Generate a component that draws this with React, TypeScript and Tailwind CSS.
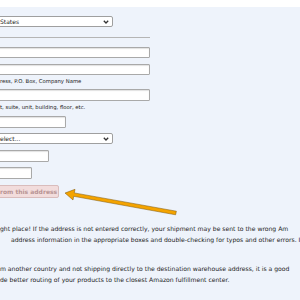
import React from "react";

function Field({ w, mt, h = "h-[11px]" }: { w: string; mt: string; h?: string }) {
  return (
    <div
      className={`${w} ${mt} ${h} -ml-[4px] bg-white border border-[#a9a9a9] rounded-[1px] shadow-[inset_0_1px_1px_rgba(0,0,0,0.12)]`}
    />
  );
}

function Select({ w, mt, label }: { w: string; mt: string; label: string }) {
  return (
    <div
      className={`${w} ${mt} h-[11px] -ml-[4px] bg-white border border-[#9f9f9f] rounded-[2px] flex items-center justify-between pl-[3px] pr-[3px]`}
    >
      <span className="text-[6px] leading-none text-[#222]">{label}</span>
      <svg width="6" height="4" viewBox="0 0 6 4">
        <path d="M0.8 0.8 L3 3 L5.2 0.8" fill="none" stroke="#333" strokeWidth="1.3" />
      </svg>
    </div>
  );
}

export default function App() {
  return (
    <div className="relative w-[300px] h-[300px] overflow-hidden bg-[#eef3fb] font-['DejaVu_Sans',Verdana,sans-serif] text-[#222]">
      <div className="h-[7px] bg-white" />
      <div className="flex flex-col items-start">
        <Select w="w-[117px]" mt="mt-[9px]" label="States" />
        <div className="mt-[10px] w-[150px] h-px bg-[#b5b5b5]" />
        <Field w="w-[154px]" mt="mt-[9px]" />
        <Field w="w-[154px]" mt="mt-[6px]" />
        <p className="mt-[2px] h-[8px] leading-[8px] text-[5.3px] whitespace-nowrap">ress, P.O. Box, Company Name</p>
        <Field w="w-[154px]" mt="mt-[4px]" h="h-[12px]" />
        <p className="mt-[2px] h-[8px] leading-[8px] text-[5.3px] whitespace-nowrap">t, suite, unit, building, floor, etc.</p>
        <Field w="w-[70px]" mt="mt-[5px]" h="h-[12px]" />
        <Select w="w-[117px]" mt="mt-[5px]" label="elect..." />
        <Field w="w-[53px]" mt="mt-[6px]" h="h-[12px]" />
        <Field w="w-[36px]" mt="mt-[5px]" h="h-[12px]" />
        <button className="mt-[6px] -ml-[4px] h-[13px] w-[63px] pl-[3px] text-left bg-[#f2dcdc] border border-[#d9bcbc] rounded-[2px] text-[6px] font-bold text-[#b89494] whitespace-nowrap">
          rom this address
        </button>
        <div className="mt-[25px] text-[6.1px] leading-[11px] whitespace-nowrap">
          <p>ght place! If the address is not entered correctly, your shipment may be sent to the wrong Am</p>
          <p className="pl-[11px]">address information in the appropriate boxes and double-checking for typos and other errors. I</p>
        </div>
        <div className="mt-[18px] text-[6.1px] leading-[11px] whitespace-nowrap">
          <p>m another country and not shipping directly to the destination warehouse address, it is a good</p>
          <p>de better routing of your products to the closest Amazon fulfillment center.</p>
        </div>
      </div>
      <svg className="absolute left-0 top-0" width="300" height="300" viewBox="0 0 300 300">
        <polygon
          points="65,193 75,189.3 74.3,192.9 176.4,211.2 175.6,214.8 73.7,196.3 73,200"
          fill="#f4a300"
          stroke="#7a5200"
          strokeWidth="0.5"
          strokeLinejoin="round"
        />
      </svg>
    </div>
  );
}
